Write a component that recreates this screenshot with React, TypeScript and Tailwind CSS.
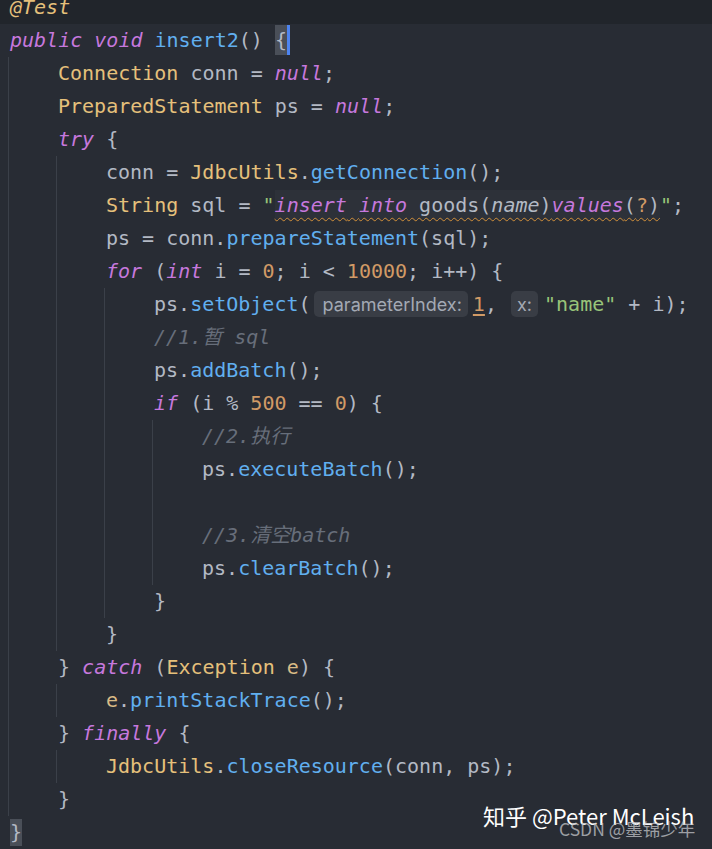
import React from "react";

type Token = { t: string; c?: string; kind?: "hint" | "brace" | "sql" | "endbrace" };
type Line = { indent: number; tokens: Token[]; dark?: boolean };

const kw = "text-[#c678dd] italic";
const fn = "text-[#61afef]";
const ty = "text-[#e5c07b]";
const num = "text-[#d19a66]";
const str = "text-[#98c379]";
const cmt = "text-[#676e7a] italic";
const prm = "text-[#d9bb86]";

const lines: Line[] = [
  { indent: 0, dark: true, tokens: [{ t: "@Test", c: ty + " italic" }] },
  {
    indent: 0,
    tokens: [
      { t: "public", c: kw },
      { t: " " },
      { t: "void", c: kw },
      { t: " " },
      { t: "insert2", c: fn },
      { t: "() " },
      { t: "{", kind: "brace" },
    ],
  },
  { indent: 1, tokens: [{ t: "Connection", c: ty }, { t: " conn = " }, { t: "null", c: kw }, { t: ";" }] },
  { indent: 1, tokens: [{ t: "PreparedStatement", c: ty }, { t: " ps = " }, { t: "null", c: kw }, { t: ";" }] },
  { indent: 1, tokens: [{ t: "try", c: kw }, { t: " {" }] },
  {
    indent: 2,
    tokens: [{ t: "conn = " }, { t: "JdbcUtils", c: ty }, { t: "." }, { t: "getConnection", c: fn }, { t: "();" }],
  },
  {
    indent: 2,
    tokens: [
      { t: "String", c: ty },
      { t: " sql = " },
      { t: '"', c: str },
      { t: "", kind: "sql" },
      { t: '"', c: str },
      { t: ";" },
    ],
  },
  { indent: 2, tokens: [{ t: "ps = conn." }, { t: "prepareStatement", c: fn }, { t: "(sql);" }] },
  {
    indent: 2,
    tokens: [
      { t: "for", c: kw },
      { t: " (" },
      { t: "int", c: kw },
      { t: " i = " },
      { t: "0", c: num },
      { t: "; i < " },
      { t: "10000", c: num },
      { t: "; i++) {" },
    ],
  },
  {
    indent: 3,
    tokens: [
      { t: "ps." },
      { t: "setObject", c: fn },
      { t: "(" },
      { t: "parameterIndex:", kind: "hint", c: "pl-[9px] pr-[6px] ml-[3px]" },
      { t: "1", c: num + " underline underline-offset-[3px] ml-[5px]" },
      { t: ", " },
      { t: "x:", kind: "hint", c: "px-[6px] ml-[2px]" },
      { t: '"name"', c: str + " ml-[6px]" },
      { t: " + i);" },
    ],
  },
  { indent: 3, tokens: [{ t: "//1.暂 sql", c: cmt }] },
  { indent: 3, tokens: [{ t: "ps." }, { t: "addBatch", c: fn }, { t: "();" }] },
  {
    indent: 3,
    tokens: [{ t: "if", c: kw }, { t: " (i % " }, { t: "500", c: num }, { t: " == " }, { t: "0", c: num }, { t: ") {" }],
  },
  { indent: 4, tokens: [{ t: "//2.执行", c: cmt }] },
  { indent: 4, tokens: [{ t: "ps." }, { t: "executeBatch", c: fn }, { t: "();" }] },
  { indent: 4, tokens: [] },
  { indent: 4, tokens: [{ t: "//3.清空batch", c: cmt }] },
  { indent: 4, tokens: [{ t: "ps." }, { t: "clearBatch", c: fn }, { t: "();" }] },
  { indent: 3, tokens: [{ t: "}" }] },
  { indent: 2, tokens: [{ t: "}" }] },
  {
    indent: 1,
    tokens: [{ t: "} " }, { t: "catch", c: kw }, { t: " (" }, { t: "Exception", c: ty }, { t: " " }, { t: "e", c: prm }, { t: ") {" }],
  },
  { indent: 2, tokens: [{ t: "e", c: prm }, { t: "." }, { t: "printStackTrace", c: fn }, { t: "();" }] },
  { indent: 1, tokens: [{ t: "} " }, { t: "finally", c: kw }, { t: " {" }] },
  {
    indent: 2,
    tokens: [{ t: "JdbcUtils", c: ty }, { t: "." }, { t: "closeResource", c: fn }, { t: "(conn, ps);" }],
  },
  { indent: 1, tokens: [{ t: "}" }] },
  { indent: 0, tokens: [{ t: "}", kind: "endbrace" }] },
];

const SqlString = () => (
  <span className="bg-[#2d3139] underline decoration-wavy decoration-[#d08f3a] decoration-1 underline-offset-[5px]">
    <span className={kw}>insert</span> <span className={kw}>into</span> goods(
    <span className="italic">name</span>)<span className={kw}>values</span>(<span className={num}>?</span>)
  </span>
);

const renderToken = (tok: Token, i: number) => {
  if (tok.kind === "hint")
    return (
      <span
        key={i}
        className={
          "inline-flex items-center h-[26px] rounded-[5px] bg-[#393d45] text-[#a3a9b4] text-[18px] font-['Inter','Noto_Sans',sans-serif] not-italic " +
          tok.c
        }
      >
        {tok.t}
      </span>
    );
  if (tok.kind === "brace")
    return (
      <span key={i} className="inline-flex items-center">
        <span className="bg-[#4a4f58] h-[30px] flex items-center">{tok.t}</span>
        <span className="w-[3px] h-[30px] bg-[#4d84f0]" />
      </span>
    );
  if (tok.kind === "endbrace")
    return (
      <span key={i} className="bg-[#4a4f58] h-[27px] flex items-center">
        {tok.t}
      </span>
    );
  if (tok.kind === "sql") return <SqlString key={i} />;
  return (
    <span key={i} className={tok.c}>
      {tok.t}
    </span>
  );
};

const App = () => {
  return (
    <div className="relative w-[712px] h-[849px] overflow-hidden bg-[#282c34] text-[#b3b9c4] text-[20px] font-['DejaVu_Sans_Mono','Noto_Sans_CJK_SC',monospace]">
      <div className="flex flex-col -mt-[9.5px]">
        {lines.map((line, idx) => (
          <div
            key={idx}
            className={"flex h-[33px] pl-[8px] whitespace-pre " + (line.dark ? "bg-[#21252b]" : "")}
          >
            {Array.from({ length: line.indent }).map((_, g) => (
              <div key={g} className="w-[48px] h-full border-l border-[#3b4049] shrink-0" />
            ))}
            <div className="flex items-center pl-[2px]">{line.tokens.map(renderToken)}</div>
          </div>
        ))}
      </div>

      <div className="absolute left-[483px] top-[799px] text-[22px] text-white font-['Noto_Sans_CJK_SC',sans-serif] whitespace-nowrap">
        知乎 @Peter McLeish
      </div>
      <div className="absolute left-[559px] top-[816px] text-[17.5px] text-[#c4c6ca]/75 font-['Noto_Sans_CJK_SC',sans-serif] whitespace-nowrap">
        CSDN @墨锦少年
      </div>
    </div>
  );
};

export default App;
